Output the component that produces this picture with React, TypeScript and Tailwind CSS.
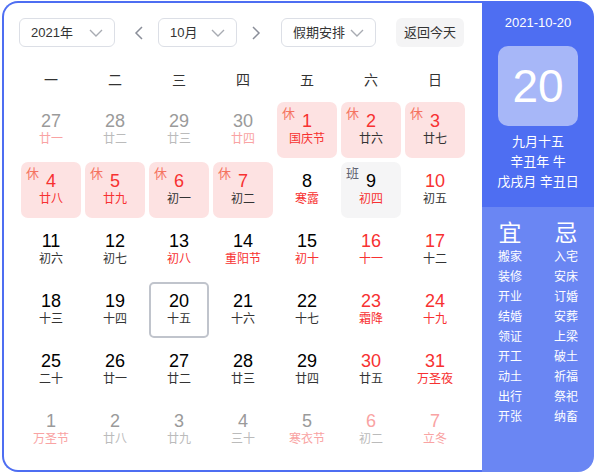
import type { ReactNode } from 'react'

type Tone = 'k' | 'r' | 'g' | 'p' | 'd' | 'l'

type Day = {
    d: number
    lunar: string
    num: Tone
    sub: Tone
    tag?: '休' | '班'
    today?: boolean
}

const toneClass: Record<Tone, string> = {
    k: 'text-black',
    r: 'text-[#f73131]',
    g: 'text-[#9a9a9a]',
    p: 'text-[#f9a3a3]',
    d: 'text-[#333333]',
    l: 'text-[#bbbbbb]',
}

const row = (items: [number, string, Tone, Tone, ('休' | '班')?][]): Day[] =>
    items.map(([d, lunar, num, sub, tag]) => ({ d, lunar, num, sub, tag }))

const days: Day[] = [
    ...row([
        [27, '廿一', 'g', 'p'],
        [28, '廿二', 'g', 'l'],
        [29, '廿三', 'g', 'l'],
        [30, '廿四', 'g', 'p'],
        [1, '国庆节', 'r', 'r', '休'],
        [2, '廿六', 'r', 'd', '休'],
        [3, '廿七', 'r', 'd', '休'],
    ]),
    ...row([
        [4, '廿八', 'r', 'r', '休'],
        [5, '廿九', 'r', 'r', '休'],
        [6, '初一', 'r', 'd', '休'],
        [7, '初二', 'r', 'd', '休'],
        [8, '寒露', 'k', 'r'],
        [9, '初四', 'k', 'r', '班'],
        [10, '初五', 'r', 'd'],
    ]),
    ...row([
        [11, '初六', 'k', 'd'],
        [12, '初七', 'k', 'd'],
        [13, '初八', 'k', 'r'],
        [14, '重阳节', 'k', 'r'],
        [15, '初十', 'k', 'r'],
        [16, '十一', 'r', 'r'],
        [17, '十二', 'r', 'd'],
    ]),
    ...row([
        [18, '十三', 'k', 'd'],
        [19, '十四', 'k', 'd'],
        [20, '十五', 'k', 'd'],
        [21, '十六', 'k', 'd'],
        [22, '十七', 'k', 'd'],
        [23, '霜降', 'r', 'r'],
        [24, '十九', 'r', 'r'],
    ]),
    ...row([
        [25, '二十', 'k', 'd'],
        [26, '廿一', 'k', 'd'],
        [27, '廿二', 'k', 'd'],
        [28, '廿三', 'k', 'd'],
        [29, '廿四', 'k', 'd'],
        [30, '廿五', 'r', 'd'],
        [31, '万圣夜', 'r', 'r'],
    ]),
    ...row([
        [1, '万圣节', 'g', 'p'],
        [2, '廿八', 'g', 'l'],
        [3, '廿九', 'g', 'l'],
        [4, '三十', 'g', 'l'],
        [5, '寒衣节', 'g', 'p'],
        [6, '初二', 'p', 'l'],
        [7, '立冬', 'p', 'p'],
    ]),
]
// 10月20日
days[23].today = true

const weekdays = ['一', '二', '三', '四', '五', '六', '日']
const good = ['搬家', '装修', '开业', '结婚', '领证', '开工', '动土', '出行', '开张']
const bad = ['入宅', '安床', '订婚', '安葬', '上梁', '破土', '祈福', '祭祀', '纳畜']

function Chevron({ dir }: { dir: 'down' | 'left' | 'right' }) {
    if (dir === 'down') {
        return (
            <svg width="14" height="8" viewBox="0 0 14 8" fill="none" stroke="#a8abb2" strokeWidth="1.4">
                <path d="M1 1l6 6 6-6" />
            </svg>
        )
    }
    return (
        <svg width="9" height="14" viewBox="0 0 9 14" fill="none" stroke="#8a8e99" strokeWidth="1.5">
            <path d={dir === 'left' ? 'M8 1L2 7l6 6' : 'M1 1l6 6-6 6'} />
        </svg>
    )
}

function Select({ width, children }: { width: string; children: ReactNode }) {
    return (
        <div className={`${width} h-[29px] flex items-center justify-between pl-[11px] pr-[11px] border border-[#dcdfe6] rounded-[6px] text-[13px] text-[#333]`}>
            <span>{children}</span>
            <Chevron dir="down" />
        </div>
    )
}

function Cell({ day }: { day: Day }) {
    const bg = day.tag === '休' ? 'bg-[#fde2e2]' : day.tag === '班' ? 'bg-[#f5f5f6]' : ''
    const frame = day.today ? 'border-2 border-[#c0c4cc] rounded-[5px] pt-[6px]' : 'rounded-[7px] pt-[8px]'
    return (
        <div className={`relative h-[56px] flex flex-col items-center ${bg} ${frame}`}>
            {day.tag && (
                <span className={`absolute left-[5px] top-[3px] text-[13px] leading-[18px] ${day.tag === '休' ? 'text-[#f5735f]' : 'text-[#5f6270]'}`}>
                    {day.tag}
                </span>
            )}
            <span className={`text-[18px] leading-[22px] ${toneClass[day.num]}`}>{day.d}</span>
            <span className={`text-[12px] leading-[14px] ${toneClass[day.sub]}`}>{day.lunar}</span>
        </div>
    )
}

export default function App() {
    return (
        <div className="w-[596px] h-[475px] bg-white pl-[2px] pt-[1px] font-['Liberation_Sans','Noto_Sans_CJK_SC',sans-serif]">
            <div className="flex w-[592px] h-[471px]">
                <div className="w-[480px] h-full border-2 border-r-0 border-[#4e6ef2] rounded-l-[16px] pl-[15px] pr-[15px] pt-[15px]">
                    <div className="flex items-center h-[29px]">
                        <Select width="w-[96px]">2021年</Select>
                        <button className="ml-[19px] w-[9px] flex justify-center"><Chevron dir="left" /></button>
                        <div className="ml-[15px]"><Select width="w-[79px]">10月</Select></div>
                        <button className="ml-[15px] w-[9px] flex justify-center"><Chevron dir="right" /></button>
                        <div className="ml-[20px]"><Select width="w-[95px]">假期安排</Select></div>
                        <button className="ml-[20px] w-[68px] h-[29px] rounded-[6px] bg-[#f4f4f5] text-[13px] text-[#333]">返回今天</button>
                    </div>

                    <div className="mx-[2px] mt-[18px] mb-[7px] grid grid-cols-7 gap-x-[4px] h-[30px] items-center">
                        {weekdays.map(w => (
                            <div key={w} className="text-center text-[14px] text-[#333]">{w}</div>
                        ))}
                    </div>

                    <div className="mx-[2px] grid grid-cols-7 gap-[4px]">
                        {days.map((day, i) => (
                            <Cell key={i} day={day} />
                        ))}
                    </div>
                </div>

                <div className="w-[112px] h-full rounded-r-[16px] overflow-hidden flex flex-col text-white">
                    <div className="h-[206px] bg-[#4e6ef2] flex flex-col items-center pt-[13px]">
                        <div className="text-[13px] leading-[18px]">2021-10-20</div>
                        <div className="mt-[14px] w-[80px] h-[80px] rounded-[10px] bg-[#a7b7f8] flex items-center justify-center text-[46px] leading-none">
                            20
                        </div>
                        <div className="mt-[6px] text-[13px] leading-[20px] text-center">
                            <div>九月十五</div>
                            <div>辛丑年 牛</div>
                            <div>戊戌月 辛丑日</div>
                        </div>
                    </div>

                    <div className="flex-1 bg-[#6a86f3] flex justify-center gap-[16px] pt-[12px]">
                        {[['宜', good], ['忌', bad]].map(([title, list]) => (
                            <div key={title as string} className="w-[40px] flex flex-col items-center">
                                <div className="text-[23px] leading-[28px]">{title as string}</div>
                                {(list as string[]).map(item => (
                                    <div key={item} className="text-[12px] leading-[20px]">{item}</div>
                                ))}
                            </div>
                        ))}
                    </div>
                </div>
            </div>
        </div>
    )
}
